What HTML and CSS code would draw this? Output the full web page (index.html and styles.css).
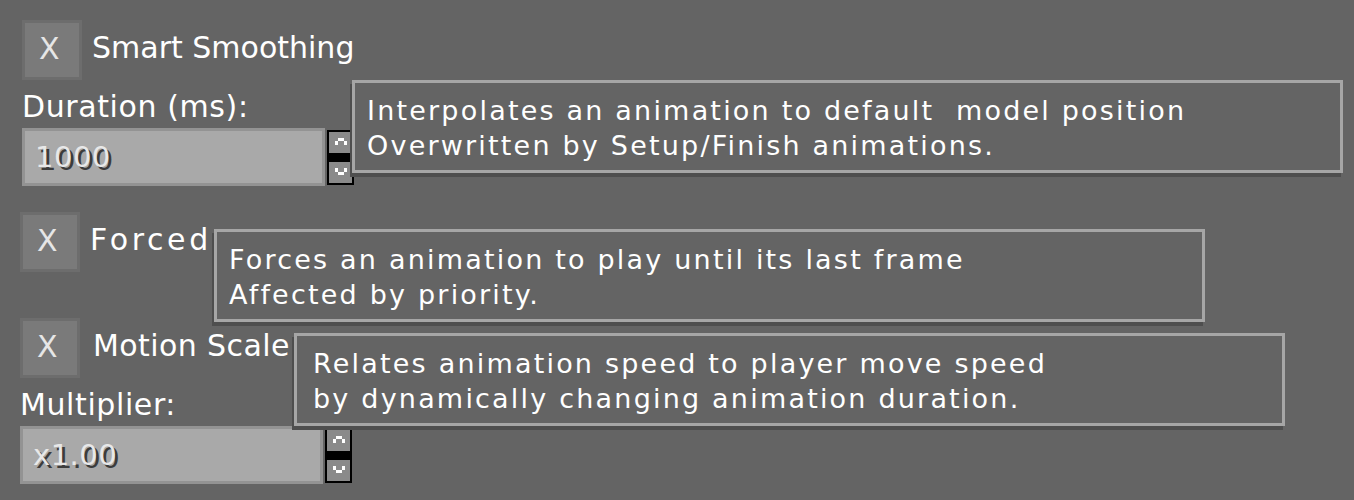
FILE: index.html
```html
<!DOCTYPE html>
<html>
<head>
<meta charset="utf-8">
<link rel="stylesheet" href="styles.css">
</head>
<body>
<div class="panel">
  <section class="group group-smooth">
    <div class="check-row">
      <div class="checkbox">X</div>
      <span class="label label-tight">Smart Smoothing</span>
      <div class="tooltip tip-smooth">
        <div class="tip-line">Interpolates an animation to default&nbsp; model position</div>
        <div class="tip-line">Overwritten by Setup/Finish animations.</div>
      </div>
    </div>
    <div class="field-label">Duration (ms):</div>
    <div class="input-row">
      <div class="input">1000</div>
      <div class="spinner">
        <div class="spin-btn"><svg width="12" height="8" viewBox="0 0 12 8"><rect x="3" y="0" width="6" height="3" fill="#fff"/><rect x="0" y="3" width="3" height="4" fill="#fff"/><rect x="9" y="3" width="3" height="4" fill="#fff"/></svg></div>
        <div class="spin-btn"><svg width="12" height="8" viewBox="0 0 12 8"><rect x="0" y="0" width="3" height="4" fill="#fff"/><rect x="9" y="0" width="3" height="4" fill="#fff"/><rect x="3" y="4" width="6" height="3" fill="#fff"/></svg></div>
      </div>
    </div>
  </section>

  <section class="group group-forced">
    <div class="check-row">
      <div class="checkbox">X</div>
      <span class="label label-wide">Forced</span>
      <div class="tooltip tip-forced">
        <div class="tip-line">Forces an animation to play until its last frame</div>
        <div class="tip-line">Affected by priority.</div>
      </div>
    </div>
  </section>

  <section class="group group-motion">
    <div class="check-row">
      <div class="checkbox">X</div>
      <span class="label label-motion">Motion Scale</span>
      <div class="tooltip tip-motion">
        <div class="tip-line">Relates animation speed to player move speed</div>
        <div class="tip-line">by dynamically changing animation duration.</div>
      </div>
    </div>
    <div class="field-label">Multiplier:</div>
    <div class="input-row">
      <div class="input">x1.00</div>
      <div class="spinner">
        <div class="spin-btn"><svg width="12" height="8" viewBox="0 0 12 8"><rect x="3" y="0" width="6" height="3" fill="#fff"/><rect x="0" y="3" width="3" height="4" fill="#fff"/><rect x="9" y="3" width="3" height="4" fill="#fff"/></svg></div>
        <div class="spin-btn"><svg width="12" height="8" viewBox="0 0 12 8"><rect x="0" y="0" width="3" height="4" fill="#fff"/><rect x="9" y="0" width="3" height="4" fill="#fff"/><rect x="3" y="4" width="6" height="3" fill="#fff"/></svg></div>
      </div>
    </div>
  </section>
</div>
</body>
</html>
```

FILE: styles.css
```css
html, body {
  margin: 0;
  padding: 0;
  background: #646464;
}
body {
  width: 1354px;
  height: 500px;
  overflow: hidden;
  font-family: "DejaVu Sans", sans-serif;
  color: #ffffff;
}
.panel {
  padding: 20px 0 0 20px;
  display: flex;
  flex-direction: column;
}
.group {
  display: flex;
  flex-direction: column;
}
.group-smooth {
  margin-left: 2px;
}
.group-forced {
  margin-top: 26px;
}
.group-motion {
  margin-top: 46px;
}
.check-row {
  position: relative;
  display: flex;
  align-items: center;
  height: 60px;
}
.checkbox {
  box-sizing: border-box;
  width: 60px;
  height: 60px;
  background: #7a7a7a;
  border: 3px solid #6d6d6d;
  font-size: 30px;
  line-height: 52px;
  padding-left: 14px;
  color: #e6e6e6;
}
.label {
  font-size: 30px;
  margin-left: 10px;
  margin-top: -6px;
  white-space: nowrap;
  letter-spacing: 0.4px;
}
.label-tight {
  letter-spacing: 0;
}
.label-wide {
  letter-spacing: 3.6px;
}
.label-motion {
  margin-left: 13px;
}
.field-label {
  font-size: 30px;
  line-height: 34px;
  margin-top: 10px;
  white-space: nowrap;
  letter-spacing: 0.6px;
}
.input-row {
  display: flex;
  align-items: center;
  margin-top: 4px;
}
.input {
  box-sizing: border-box;
  width: 303px;
  height: 58px;
  background: #a9a9a9;
  border: 3px solid #939393;
  font-size: 29px;
  line-height: 52px;
  padding-left: 10px;
  color: #e8e8e8;
  text-shadow: 3px 3px 0 #3c3c3c;
  letter-spacing: 0.5px;
}
.spinner {
  box-sizing: border-box;
  width: 27px;
  height: 55px;
  margin-left: 2px;
  background: #000;
  padding: 2px 2px;
  display: flex;
  flex-direction: column;
  justify-content: space-between;
}
.spin-btn {
  height: 21px;
  background: #8a8a8a;
  display: flex;
  align-items: center;
  justify-content: center;
}
.tooltip {
  position: absolute;
  box-sizing: border-box;
  width: 991px;
  height: 93px;
  border: 3px solid #a6a6a6;
  background: #646464;
  box-shadow: -2px 4px 0 #4e4e4e;
  padding: 10px 0 0 12px;
  font-size: 27px;
  line-height: 35px;
  white-space: nowrap;
  letter-spacing: 2.2px;
  z-index: 2;
}
.tip-smooth {
  left: 330px;
  top: 60px;
}
.tip-forced {
  left: 194px;
  top: 17px;
}
.tip-motion {
  left: 274px;
  top: 15px;
  padding-left: 16px;
}
```
